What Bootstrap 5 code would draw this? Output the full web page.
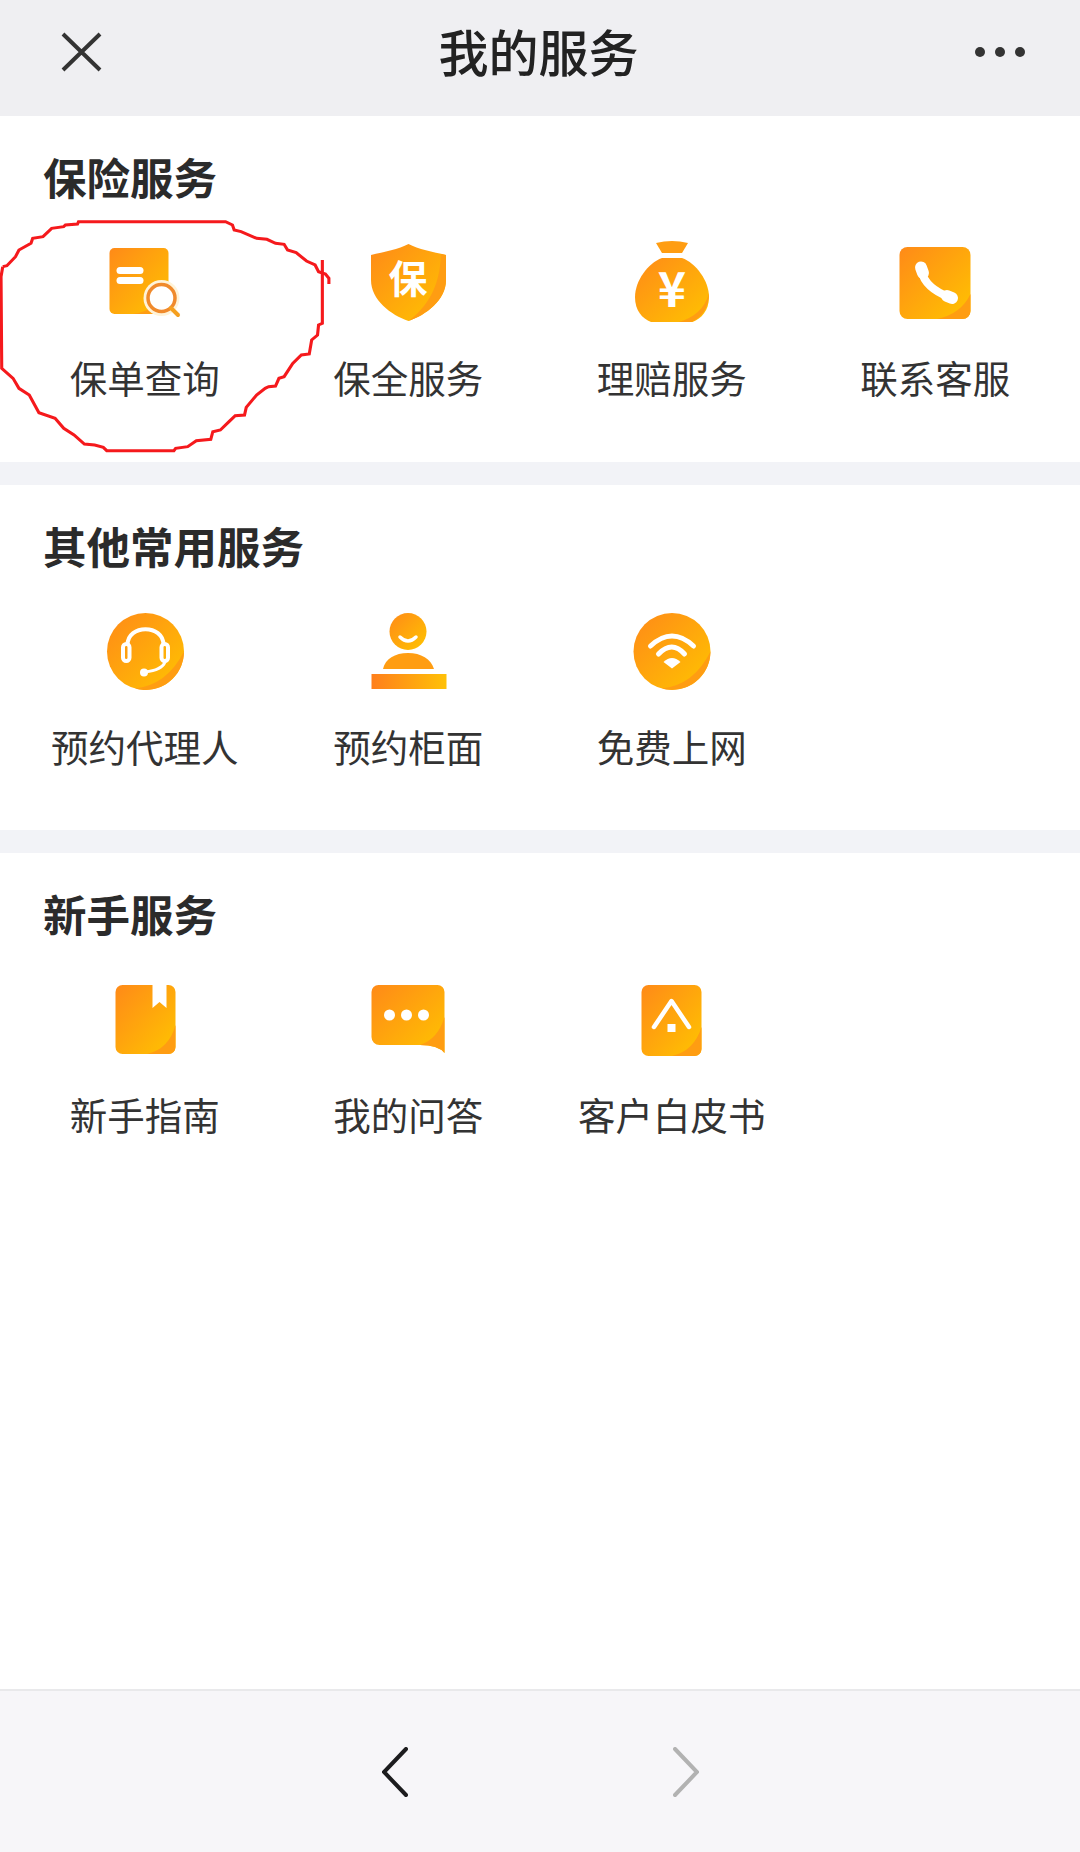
<!DOCTYPE html>
<html lang="zh-CN">
<head>
  <meta charset="UTF-8">
  <title>我的服务</title>
  <meta name="viewport" content="width=device-width, initial-scale=1">
  <link href="https://cdn.jsdelivr.net/npm/bootstrap@5.3.3/dist/css/bootstrap.min.css" rel="stylesheet">
  <style>
    body { background: #f2f3f7; font-family: "Noto Sans CJK SC", "Noto Sans", sans-serif; color: #333; height: 1852px; }
    .top-bar { height: 116px; background: #efeff2; padding: 0 55px 12px 61px; }
    .top-title { font-size: 50px; font-weight: 500; color: #222; line-height: 1; margin: 0 0 5px; }
    .svc-block { background: #fff; height: 345.5px; padding: 37px 13px 0; margin-bottom: 23px; }
    .svc-last { height: auto; margin-bottom: 0; }
    .svc-head { font-size: 43.500px; line-height: 48px; font-weight: 700; color: #2b2b2b; margin: 0 0 37px 30px; }
    .svc-icon { display: block; width: 100px; height: 84px; margin: 0 auto; }
    .svc-label { font-size: 37.500px; line-height: 50px; margin-top: 30px; color: #333; white-space: nowrap; }
    .svc-chartext { font-family: "Noto Sans CJK SC", sans-serif; font-weight: 700; fill: #fff; }
    .bottom-bar { height: 163px; background: #f7f6f9; border-top: 2px solid #e9e9eb; gap: 265px; }
    .scribble { position: absolute; left: 0; top: 0; width: 540px; height: 480px; pointer-events: none; }
  </style>
</head>
<body class="d-flex flex-column position-relative">

  <!-- shared gradients -->
  <svg width="0" height="0" class="position-absolute">
    <defs>
      <linearGradient id="og" x1="0" y1="0" x2="1" y2="1">
        <stop offset="0" stop-color="#ff8a18"/>
        <stop offset="1" stop-color="#ffc400"/>
      </linearGradient>
      <linearGradient id="og2" x1="0" y1="0" x2="1" y2="0">
        <stop offset="0" stop-color="#ff7f1c"/>
        <stop offset="1" stop-color="#ffc107"/>
      </linearGradient>
    </defs>
  </svg>

  <!-- Header -->
  <div class="top-bar d-flex align-items-center justify-content-between flex-shrink-0">
    <svg width="41" height="40" viewBox="0 0 41 40"><path d="M2 2 39 38M39 2 2 38" stroke="#333" stroke-width="4" fill="none"/></svg>
    <h1 class="top-title">我的服务</h1>
    <svg width="50" height="10" viewBox="0 0 50 10" fill="#333"><circle cx="5" cy="5" r="5"/><circle cx="25" cy="5" r="5"/><circle cx="45" cy="5" r="5"/></svg>
  </div>

  <!-- 保险服务 -->
  <section class="svc-block flex-shrink-0">
    <h2 class="svc-head">保险服务</h2>
    <div class="row g-0 text-center">
      <div class="col-3">
        <svg class="svc-icon" viewBox="0 0 100 84">
          <rect x="14.5" y="10" width="59" height="66" rx="5" fill="url(#og)"/>
          <path d="M73.5 50V71a5 5 0 0 1-5 5H38Q62 73 73.5 50Z" fill="#ff9d12"/>
          <rect x="21.5" y="29" width="27" height="7" rx="3.5" fill="#fff"/>
          <rect x="21.5" y="39" width="27" height="7" rx="3.5" fill="#fff"/>
          <circle cx="66.5" cy="60" r="18" fill="#fff3d8"/>
          <circle cx="66.5" cy="60" r="13.5" fill="#fff" stroke="#f08a2c" stroke-width="3.5"/>
          <path d="M76 70 83 77" stroke="#f5a020" stroke-width="4" stroke-linecap="round"/>
        </svg>
        <div class="svc-label">保单查询</div>
      </div>
      <div class="col-3">
        <svg class="svc-icon" viewBox="0 0 100 84">
          <path d="M50.5 6C60 11 75 14 88 17V42C88 62 68 77 50.5 83 33 77 13 62 13 42V17C26 14 41 11 50.5 6Z" fill="url(#og)"/>
          <path d="M88 17V42C88 62 68 77 50.5 83 68 70 82 50 83 16Z" fill="#ff9d12"/>
          <text class="svc-chartext" x="50" y="55" text-anchor="middle" font-size="39">保</text>
        </svg>
        <div class="svc-label">保全服务</div>
      </div>
      <div class="col-3">
        <svg class="svc-icon" viewBox="0 0 100 84">
          <path d="M34 5Q50 1 66 5L60 15H40Z" fill="#ff9d12"/>
          <path d="M40 20H60C74 25 87 43 87 59 87 78 72 86 60 86H40C27 86 13 78 13 59 13 43 26 25 40 20Z" fill="url(#og)"/>
          <path d="M87 55C87 76 72 86 60 86H46C65 84 82 75 87 55Z" fill="#ff9d12"/>
          <text class="svc-chartext" x="50" y="69" text-anchor="middle" font-size="48">¥</text>
        </svg>
        <div class="svc-label">理赔服务</div>
      </div>
      <div class="col-3">
        <svg class="svc-icon" viewBox="0 0 100 84">
          <rect x="14.5" y="9" width="71" height="72" rx="8" fill="url(#og)"/>
          <path d="M85.5 56V73a8 8 0 0 1-8 8H52Q76 76 85.5 56Z" fill="#ff9d12"/>
          <path d="M36.500 33Q40 50 65 59.500" stroke="#fff" stroke-width="8" fill="none"/>
          <path d="M36 29.500 38 35M62 58 67 60" stroke="#fff" stroke-width="12" stroke-linecap="round"/>
        </svg>
        <div class="svc-label">联系客服</div>
      </div>
    </div>
  </section>

  <!-- 其他常用服务 -->
  <section class="svc-block flex-shrink-0">
    <h2 class="svc-head">其他常用服务</h2>
    <div class="row g-0 text-center">
      <div class="col-3">
        <svg class="svc-icon" viewBox="0 0 100 84">
          <circle cx="50.500" cy="44.500" r="38.500" fill="url(#og)"/>
          <path d="M89 44.500A38.500 38.500 0 0 1 40 81.500Q72 78 89 44.500Z" fill="#ff9d12"/>
          <path d="M32.500 38C32.500 17 68.500 17 68.500 38" stroke="#fff" stroke-width="4" fill="none"/>
          <rect x="28" y="37" width="6.500" height="17" rx="3.200" fill="none" stroke="#fff" stroke-width="4"/>
          <rect x="66.500" y="37" width="6.500" height="17" rx="3.200" fill="none" stroke="#fff" stroke-width="4"/>
          <path d="M70 55Q67 63 50 65" stroke="#fff" stroke-width="3" fill="none"/>
          <circle cx="49" cy="65.500" r="4" fill="#fff"/>
        </svg>
        <div class="svc-label">预约代理人</div>
      </div>
      <div class="col-3">
        <svg class="svc-icon" viewBox="0 0 100 84">
          <circle cx="50" cy="24.500" r="18.500" fill="url(#og)"/>
          <path d="M42 30Q50 38 58 30" stroke="#fff" stroke-width="3.500" fill="none" stroke-linecap="round"/>
          <path d="M25 62C27 52 37 46 50 46S73 52 76 62Z" fill="#ff9d12"/>
          <rect x="13.500" y="67" width="75" height="15" fill="url(#og2)"/>
        </svg>
        <div class="svc-label">预约柜面</div>
      </div>
      <div class="col-3">
        <svg class="svc-icon" viewBox="0 0 100 84">
          <circle cx="50" cy="44.500" r="38.500" fill="url(#og)"/>
          <path d="M88.500 44.500A38.500 38.500 0 0 1 40 81.500Q72 78 88.500 44.500Z" fill="#ff9d12"/>
          <path d="M28.500 39Q50 19 71.500 39" stroke="#fff" stroke-width="5" fill="none" stroke-linecap="round"/>
          <path d="M36.500 47Q50 33 62.500 47" stroke="#fff" stroke-width="5" fill="none" stroke-linecap="round"/>
          <path d="M41.500 55Q50 47 58.500 55L50 61.500Z" fill="#fff"/>
        </svg>
        <div class="svc-label">免费上网</div>
      </div>
    </div>
  </section>

  <!-- 新手服务 -->
  <section class="svc-block svc-last flex-grow-1">
    <h2 class="svc-head">新手服务</h2>
    <div class="row g-0 text-center">
      <div class="col-3">
        <svg class="svc-icon" viewBox="0 0 100 84">
          <rect x="20.500" y="10" width="60" height="69" rx="7" fill="url(#og)"/>
          <path d="M80.500 50V72a7 7 0 0 1-7 7H52Q74 74 80.500 50Z" fill="#ff9d12"/>
          <path d="M57.500 8H71.500V33L64.500 27 57.500 33Z" fill="#fff"/>
        </svg>
        <div class="svc-label">新手指南</div>
      </div>
      <div class="col-3">
        <svg class="svc-icon" viewBox="0 0 100 84">
          <path d="M20.500 10H79.500a7 7 0 0 1 7 7V78Q80 70 62 70H21.500a8 8 0 0 1-8-8V17a7 7 0 0 1 7-7Z" fill="url(#og)"/>
          <path d="M86.500 42V78Q80 70 62 70Q80 64 86.500 42Z" fill="#ff9d12"/>
          <circle cx="31.500" cy="40" r="5.500" fill="#fff"/>
          <circle cx="48.500" cy="40" r="5.500" fill="#fff"/>
          <circle cx="65.500" cy="40" r="5.500" fill="#fff"/>
        </svg>
        <div class="svc-label">我的问答</div>
      </div>
      <div class="col-3">
        <svg class="svc-icon" viewBox="0 0 100 84">
          <rect x="19.500" y="10" width="60" height="71" rx="7" fill="url(#og)"/>
          <path d="M79.500 52V74a7 7 0 0 1-7 7H50Q72 76 79.500 52Z" fill="#ff9d12"/>
          <path d="M32 52 49.500 26 67 52" stroke="#fff" stroke-width="4.500" fill="none" stroke-linecap="round" stroke-linejoin="round"/>
          <rect x="45.500" y="49" width="8" height="8" fill="#fff"/>
        </svg>
        <div class="svc-label">客户白皮书</div>
      </div>
    </div>
  </section>

  <!-- Bottom arrows -->
  <div class="bottom-bar d-flex align-items-center justify-content-center flex-shrink-0">
    <svg width="26" height="50" viewBox="0 0 26 50"><path d="M24 2 2 25 24 48" stroke="#1c1c1e" stroke-width="4" fill="none" stroke-linecap="round"/></svg>
    <svg width="26" height="50" viewBox="0 0 26 50"><path d="M2 2 24 25 2 48" stroke="#b2b2b2" stroke-width="4" fill="none" stroke-linecap="round"/></svg>
  </div>

  <!-- red hand drawn circle on top of the first item -->
  <svg class="scribble" viewBox="0 0 1568 1440" preserveAspectRatio="none">
    <polyline fill="none" stroke="#f5191c" stroke-width="9" points="8,800 20,797 45,770 55,750 90,730 95,715 125,710 150,685 185,680 190,675 225,672 228,665 655,665 675,675 680,690 700,695 745,715 775,718 800,730 825,733 835,750 860,758 890,783 915,795 925,815 945,822 955,835 955,852"/>
    <polyline fill="none" stroke="#f5191c" stroke-width="9" points="936,780 936,970 925,975 922,1005 905,1020 898,1062 875,1065 850,1090 825,1130 810,1135 800,1158 780,1160 770,1165 745,1185 715,1222 710,1245 683,1247 665,1265 640,1290 618,1295 612,1318 570,1322 545,1340 510,1345 505,1352 310,1352 300,1342 275,1335 245,1332 215,1305 185,1285 160,1255 113,1238 85,1185 55,1165 38,1135 5,1105 3,830 8,800"/>
  </svg>

  <script src="https://cdn.jsdelivr.net/npm/bootstrap@5.3.3/dist/js/bootstrap.bundle.min.js"></script>
</body>
</html>
